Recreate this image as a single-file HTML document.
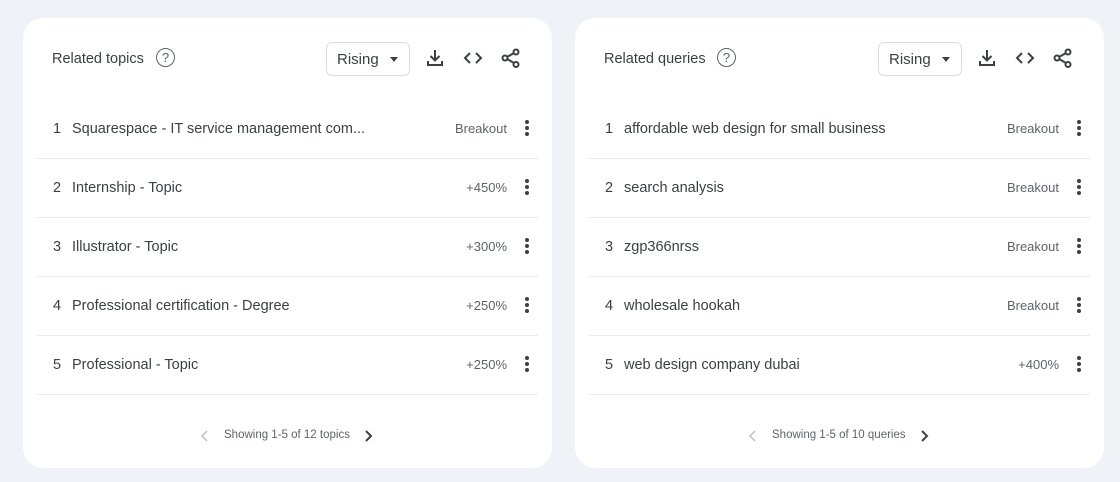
<!DOCTYPE html>
<html><head><style>
body{margin:0;width:1120px;height:482px;background:#eff2f7;font-family:"Liberation Sans",Arial,sans-serif;position:relative;overflow:hidden}
.card{position:absolute;top:18px;width:529px;height:450px;background:#fff;border-radius:20px}
.title{position:absolute;left:29px;top:33px;font-size:14.5px;color:#3c4043}
.q{position:absolute;left:133px;top:30px;width:17px;height:17px;border:1.6px solid #5f6368;border-radius:50%;font-size:13px;color:#5f6368;text-align:center;line-height:17px}
.dd{position:absolute;left:303px;top:24px;width:82px;height:32px;border:1px solid #dadce0;border-radius:6px;font-size:15px;color:#3c4043}
.dd span{position:absolute;left:10px;top:8px}
.dd i{position:absolute;left:63px;top:14px;border-left:4px solid transparent;border-right:4px solid transparent;border-top:5px solid #3c4043}
.ic{position:absolute;top:30px}
.row{position:absolute;left:14px;width:501px;height:59px;border-bottom:1px solid #e8eaed;font-size:14.5px;color:#3c4043}
.row .n{position:absolute;left:16px;top:22px}
.row .t{position:absolute;left:35px;top:22px}
.row .v{position:absolute;right:31px;top:22px;font-size:13px;color:#5f6368}
.row .d{position:absolute;right:9px;top:21px;width:4px}
.row .d b{display:block;width:4px;height:4px;background:#3c4043;border-radius:50%;margin-bottom:2px}
.foot{position:absolute;top:411px;font-size:11.5px;color:#5f6368}
</style></head><body>
<div class="card" style="left:23px">
<div class="title">Related topics</div><div class="q">?</div>
<div class="dd"><span>Rising</span><i></i></div>
<svg class="ic" style="left:403px" width="18" height="20" viewBox="0 0 18 20"><path d="M9 2v10M4.5 8l4.5 4.5L13.5 8M2 13v4h14v-4" fill="none" stroke="#3c4043" stroke-width="2"/></svg>
<svg class="ic" style="left:440px" width="20" height="20" viewBox="0 0 20 20"><path d="M7 5L2 10l5 5M13 5l5 5-5 5" fill="none" stroke="#3c4043" stroke-width="2"/></svg>
<svg class="ic" style="left:478px" width="20" height="20" viewBox="0 0 20 20"><circle cx="15" cy="4" r="2.5" fill="none" stroke="#3c4043" stroke-width="2"/><circle cx="4" cy="10" r="2.5" fill="none" stroke="#3c4043" stroke-width="2"/><circle cx="15" cy="16.5" r="2.5" fill="none" stroke="#3c4043" stroke-width="2"/><path d="M6 9l7-4M6 11l7 4" stroke="#3c4043" stroke-width="2"/></svg>
<div class="row" style="top:81px"><span class="n">1</span><span class="t">Squarespace - IT service management com...</span><span class="v">Breakout</span><span class="d"><b></b><b></b><b></b></span></div>
<div class="row" style="top:140px"><span class="n">2</span><span class="t">Internship - Topic</span><span class="v">+450%</span><span class="d"><b></b><b></b><b></b></span></div>
<div class="row" style="top:199px"><span class="n">3</span><span class="t">Illustrator - Topic</span><span class="v">+300%</span><span class="d"><b></b><b></b><b></b></span></div>
<div class="row" style="top:258px"><span class="n">4</span><span class="t">Professional certification - Degree</span><span class="v">+250%</span><span class="d"><b></b><b></b><b></b></span></div>
<div class="row" style="top:317px"><span class="n">5</span><span class="t">Professional - Topic</span><span class="v">+250%</span><span class="d"><b></b><b></b><b></b></span></div>
<svg style="position:absolute;left:177px;top:411px" width="10" height="14"><path d="M7 2L2 7l5 5" fill="none" stroke="#c4c7c9" stroke-width="1.6"/></svg>
<div class="foot" style="left:201px">Showing 1-5 of 12 topics</div>
<svg style="position:absolute;left:340px;top:411px" width="10" height="14"><path d="M3 2l5 5-5 5" fill="none" stroke="#3c4043" stroke-width="2"/></svg>
</div>
<div class="card" style="left:575px">
<div class="title">Related queries</div><div class="q" style="left:142px">?</div>
<div class="dd"><span>Rising</span><i></i></div>
<svg class="ic" style="left:403px" width="18" height="20" viewBox="0 0 18 20"><path d="M9 2v10M4.5 8l4.5 4.5L13.5 8M2 13v4h14v-4" fill="none" stroke="#3c4043" stroke-width="2"/></svg>
<svg class="ic" style="left:440px" width="20" height="20" viewBox="0 0 20 20"><path d="M7 5L2 10l5 5M13 5l5 5-5 5" fill="none" stroke="#3c4043" stroke-width="2"/></svg>
<svg class="ic" style="left:478px" width="20" height="20" viewBox="0 0 20 20"><circle cx="15" cy="4" r="2.5" fill="none" stroke="#3c4043" stroke-width="2"/><circle cx="4" cy="10" r="2.5" fill="none" stroke="#3c4043" stroke-width="2"/><circle cx="15" cy="16.5" r="2.5" fill="none" stroke="#3c4043" stroke-width="2"/><path d="M6 9l7-4M6 11l7 4" stroke="#3c4043" stroke-width="2"/></svg>
<div class="row" style="top:81px"><span class="n">1</span><span class="t">affordable web design for small business</span><span class="v">Breakout</span><span class="d"><b></b><b></b><b></b></span></div>
<div class="row" style="top:140px"><span class="n">2</span><span class="t">search analysis</span><span class="v">Breakout</span><span class="d"><b></b><b></b><b></b></span></div>
<div class="row" style="top:199px"><span class="n">3</span><span class="t">zgp366nrss</span><span class="v">Breakout</span><span class="d"><b></b><b></b><b></b></span></div>
<div class="row" style="top:258px"><span class="n">4</span><span class="t">wholesale hookah</span><span class="v">Breakout</span><span class="d"><b></b><b></b><b></b></span></div>
<div class="row" style="top:317px"><span class="n">5</span><span class="t">web design company dubai</span><span class="v">+400%</span><span class="d"><b></b><b></b><b></b></span></div>
<svg style="position:absolute;left:173px;top:411px" width="10" height="14"><path d="M7 2L2 7l5 5" fill="none" stroke="#c4c7c9" stroke-width="1.6"/></svg>
<div class="foot" style="left:197px">Showing 1-5 of 10 queries</div>
<svg style="position:absolute;left:344px;top:411px" width="10" height="14"><path d="M3 2l5 5-5 5" fill="none" stroke="#3c4043" stroke-width="2"/></svg>
</div>
</body></html>
